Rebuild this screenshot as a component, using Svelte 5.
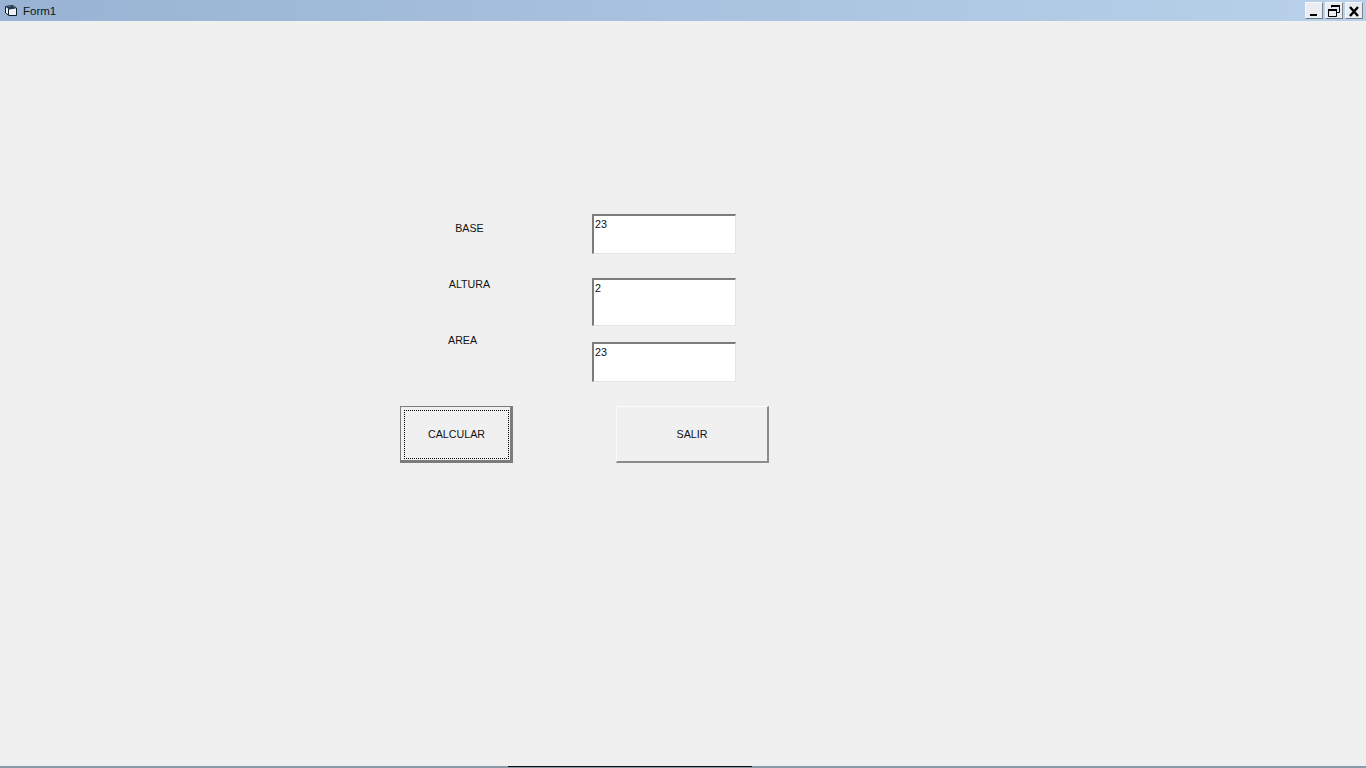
<script>
  let base = "23";
  let altura = "2";
  let area = "23";
</script>

<div class="window">
  <header class="titlebar">
    <svg class="form-icon" width="14" height="13" viewBox="0 0 14 13">
      <path d="M1.5 2.5 L8.5 1.5 L12.5 4 L12.5 11.5 L5 11.5 L1.5 9 Z" fill="#eef2f6" stroke="#0d1c28" />
      <path d="M2 3 L8.5 2 L12 4.5 L5 5.5 Z" fill="#1c3850" />
      <path d="M4.5 5 V11" stroke="#0d1c28" />
    </svg>
    <span class="title">Form1</span>
    <div class="controls">
      <button class="ctl" aria-label="Minimizar">
        <svg width="14" height="14" viewBox="0 0 14 14"><rect x="3" y="10" width="7" height="2" fill="#000" /></svg>
      </button>
      <button class="ctl" aria-label="Restaurar">
        <svg width="14" height="14" viewBox="0 0 14 14">
          <path d="M4.5 3.5 V1.5 H12.5 V8.5 H10" fill="none" stroke="#000" />
          <rect x="4" y="1" width="9" height="2" fill="#000" />
          <path d="M1.5 5.5 H9.5 V12.5 H1.5 Z" fill="none" stroke="#000" />
          <rect x="1" y="5" width="9" height="2" fill="#000" />
        </svg>
      </button>
      <button class="ctl" aria-label="Cerrar">
        <svg width="14" height="14" viewBox="0 0 14 14">
          <path d="M3 3 L11 12 M11 3 L3 12" stroke="#000" stroke-width="2.4" />
        </svg>
      </button>
    </div>
  </header>

  <main class="form">
    <div class="fields">
      <div class="labels">
        <span class="lbl centered">BASE</span>
        <span class="lbl centered">ALTURA</span>
        <span class="lbl">AREA</span>
      </div>
      <div class="boxes">
        <textarea class="box first" readonly value={base}></textarea>
        <textarea class="box tall" readonly value={altura}></textarea>
        <textarea class="box" readonly value={area}></textarea>
      </div>
    </div>
    <div class="actions">
      <button class="cmd calcular"><span class="focus">CALCULAR</span></button>
      <button class="cmd salir">SALIR</button>
    </div>
  </main>

  <footer class="taskbar-edge"><div class="dark"></div></footer>
</div>

<style>
  :global(body) {
    margin: 0;
    background: #f0f0f0;
  }
  .window {
    width: 1366px;
    height: 768px;
    display: flex;
    flex-direction: column;
    overflow: hidden;
    font-family: "Liberation Sans", Arial, sans-serif;
    font-size: 10.7px;
    color: #111;
  }
  .titlebar {
    height: 21px;
    flex: none;
    display: flex;
    align-items: center;
    padding: 0 3px 0 4px;
    box-sizing: border-box;
    background: linear-gradient(90deg, #98b3d3 0%, #a8c2df 50%, #b9d1ea 100%);
  }
  .form-icon {
    margin-right: 5px;
  }
  .title {
    font-size: 11.5px;
    color: #0c1620;
  }
  .controls {
    margin-left: auto;
    display: flex;
    gap: 2px;
  }
  .ctl {
    width: 18px;
    height: 17px;
    padding: 0;
    display: flex;
    align-items: center;
    justify-content: center;
    background: #e9edf1;
    border: 1px solid;
    border-color: #f6f8fa #7d8690 #6f7780 #f6f8fa;
  }
  .form {
    flex: 1;
    padding: 193px 0 0 400px;
    background: #f0f0f0;
  }
  .fields {
    display: flex;
    padding-left: 48px;
  }
  .labels {
    width: 144px;
    display: flex;
    flex-direction: column;
    gap: 43px;
    padding-top: 8px;
    align-items: flex-start;
  }
  .lbl {
    width: 43px;
    height: 13px;
    line-height: 13px;
    white-space: nowrap;
  }
  .centered {
    text-align: center;
  }
  .boxes {
    display: flex;
    flex-direction: column;
    gap: 16px;
    width: 144px;
  }
  .box {
    display: block;
    box-sizing: border-box;
    width: 144px;
    height: 40px;
    margin: 0;
    padding: 2px 2px 0 1px;
    resize: none;
    overflow: hidden;
    outline: none;
    background: #fff;
    border-style: solid;
    border-width: 2px 1px 1px 2px;
    border-color: #7c7c7c #e4e4e4 #e4e4e4 #7c7c7c;
    border-radius: 0;
    font: 10.8px/13px "Liberation Sans", Arial, sans-serif;
    color: #111;
  }
  .tall {
    height: 48px;
  }
  .first {
    margin-bottom: 8px;
  }
  .actions {
    display: flex;
    margin-top: 24px;
    gap: 103px;
  }
  .cmd {
    box-sizing: border-box;
    height: 57px;
    padding: 0;
    background: #f0f0f0;
    font: 10.7px/13px "Liberation Sans", Arial, sans-serif;
    color: #111;
    border-style: solid;
    border-radius: 0;
  }
  .calcular {
    width: 113px;
    padding: 3px 1px 1px 3px;
    border-width: 1px 3px 3px 1px;
    border-color: #7c7c7c;
  }
  .focus {
    display: flex;
    height: 100%;
    box-sizing: border-box;
    align-items: center;
    justify-content: center;
    border: 1px dotted #000;
  }
  .salir {
    width: 153px;
    border-width: 1px 2px 2px 1px;
    border-color: #fbfbfb #8c8c8c #8c8c8c #fbfbfb;
  }
  .taskbar-edge {
    flex: none;
    height: 2px;
    background: #8a9aa8;
  }
  .dark {
    width: 244px;
    height: 1px;
    margin-left: 508px;
    background: #111;
  }
</style>
